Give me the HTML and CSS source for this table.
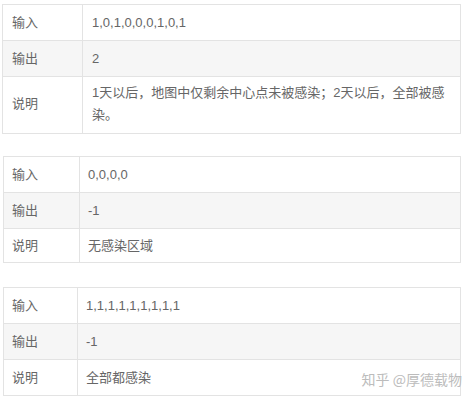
FILE: index.html
```html
<!DOCTYPE html>
<html lang="zh">
<head>
<meta charset="utf-8">
<link rel="stylesheet" href="styles.css">
</head>
<body>
<div class="page">
  <table class="ex ex1">
    <colgroup><col class="kc"><col></colgroup>
    <tr><td>输入</td><td>1,0,1,0,0,0,1,0,1</td></tr>
    <tr class="alt"><td>输出</td><td>2</td></tr>
    <tr class="tall"><td>说明</td><td>1天以后，地图中仅剩余中心点未被感染；2天以后，全部被感染。</td></tr>
  </table>
  <table class="ex ex2">
    <colgroup><col class="kc"><col></colgroup>
    <tr><td>输入</td><td>0,0,0,0</td></tr>
    <tr class="alt"><td>输出</td><td>-1</td></tr>
    <tr class="short"><td>说明</td><td>无感染区域</td></tr>
  </table>
  <div class="last">
    <table class="ex ex3">
      <colgroup><col class="kc"><col></colgroup>
      <tr><td>输入</td><td>1,1,1,1,1,1,1,1,1</td></tr>
      <tr class="alt"><td>输出</td><td>-1</td></tr>
      <tr><td>说明</td><td>全部都感染</td></tr>
    </table>
    <span class="mark">知乎 @厚德载物</span>
  </div>
</div>
</body>
</html>
```

FILE: styles.css
```css
html, body {
  margin: 0;
  padding: 0;
  background: #fff;
}
.page {
  padding: 4px 13px 0 3px;
  display: flex;
  flex-direction: column;
  font-family: "Liberation Sans", "Noto Sans CJK SC", sans-serif;
  font-size: 13px;
  color: #666;
}
.ex {
  border-collapse: collapse;
  width: 458px;
  table-layout: fixed;
}
.ex1 { margin-left: -1px; width: 459px; }
.ex1 .kc { width: 80px; }
.ex2 .kc { width: 76px; }
.ex3 .kc { width: 74px; }
.ex td {
  border: 1px solid #e3e3e3;
  height: 35px;
  padding: 0 9px;
  line-height: 24px;
  vertical-align: middle;
}
.ex2 td, .ex3 td { padding-left: 8px; }
.ex .alt td { background: #f6f6f6; }
.ex .tall td { height: 53px; line-height: 22px; padding-bottom: 3px; }
.ex .short td { height: 33px; }
.ex2 { margin-top: 22px; }
.last {
  position: relative;
  margin-top: 24px;
}
.mark {
  position: absolute;
  right: -1px;
  bottom: 9px;
  font-size: 14px;
  color: #bcbcbc;
  font-family: "Noto Sans CJK SC", sans-serif;
  line-height: 16px;
}
```
